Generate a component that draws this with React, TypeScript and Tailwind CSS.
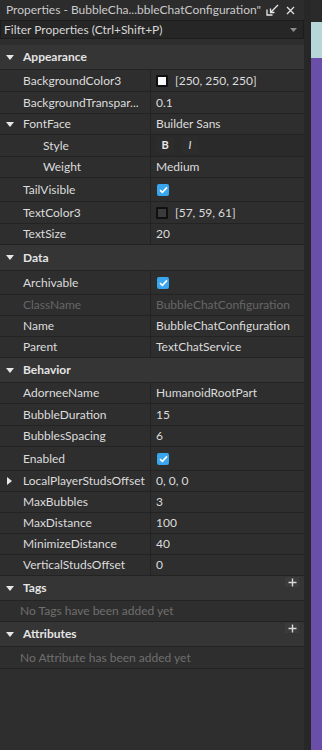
import React from "react";

const FONT = { fontFamily: "Lato, 'Noto Sans', sans-serif" };

function Down() {
  return (
    <svg width="8" height="5" viewBox="0 0 8 5"><polygon points="0,0 8,0 4,5" fill="#e6e6e6" /></svg>
  );
}
function Right() {
  return (
    <svg width="5" height="8" viewBox="0 0 5 8"><polygon points="0,0 5,4 0,8" fill="#e6e6e6" /></svg>
  );
}

function Check() {
  return (
    <div className="w-[12px] h-[12px] rounded-[2px] bg-[#39a5ef] flex items-center justify-center">
      <svg width="9" height="8" viewBox="0 0 9 8"><path d="M1 4.2 L3.4 6.4 L8 1.4" stroke="#fff" strokeWidth="1.6" fill="none" /></svg>
    </div>
  );
}

function Swatch({ color, text }: { color: string; text: string }) {
  return (
    <div className="flex items-center">
      <div className="w-[12px] h-[12px] border border-[#101010] rounded-[1px] p-[1px] bg-[#101010]">
        <div className="w-full h-full" style={{ background: color }} />
      </div>
      <span className="ml-[7px]">{text}</span>
    </div>
  );
}

function Header({ title, h = "h-[25px]", plus = false }: { title: string; h?: string; plus?: boolean }) {
  return (
    <div className={`relative flex items-center bg-[#353535] border-b border-[#232323] ${h}`}>
      <div className="w-[23px] pl-[6px] flex items-center"><Down /></div>
      <span className="text-[12px] font-bold text-[#e4e4e4]">{title}</span>
      {plus && (
        <div className="absolute right-[5px] top-[1px] w-[14px] h-[10px] bg-[#3b3b3b] flex items-center justify-center">
          <svg width="9" height="9" viewBox="0 0 9 9"><path d="M4.5 0.5 V8.5 M0.5 4.5 H8.5" stroke="#d8d8d8" strokeWidth="1.4" /></svg>
        </div>
      )}
    </div>
  );
}

function Row({
  name,
  h = "h-[21px]",
  nested = false,
  arrow,
  disabled = false,
  valueBg = "",
  children,
}: {
  name: string;
  h?: string;
  nested?: boolean;
  arrow?: "down" | "right";
  disabled?: boolean;
  valueBg?: string;
  children?: React.ReactNode;
}) {
  const tc = disabled ? "text-[#666666]" : "text-[#dcdcdc]";
  return (
    <div className={`flex border-b border-[#232323] text-[12px] ${h} ${tc}`}>
      <div className="w-[151px] shrink-0 flex items-center border-r border-[#232323] whitespace-nowrap overflow-hidden">
        <div className={`${nested ? "w-[43px]" : "w-[23px]"} shrink-0 pl-[6px] flex items-center`}>
          {arrow === "down" && <Down />}
          {arrow === "right" && <div className="pl-[1px] flex"><Right /></div>}
        </div>
        <span>{name}</span>
      </div>
      <div className={`flex-1 flex items-center pl-[5px] whitespace-nowrap overflow-hidden ${valueBg}`}>{children}</div>
    </div>
  );
}

export default function App() {
  return (
    <div className="w-[322px] h-[750px] flex bg-[#2e2e2e] overflow-hidden" style={FONT}>
      <div className="w-[304px] shrink-0 flex flex-col">
        <div className="h-[20px] flex items-center bg-[#2c2c2c] pl-[6px] pr-[9px] text-[12px] text-[#cacaca]">
          <span className="whitespace-nowrap">Properties - BubbleCha...bbleChatConfiguration"</span>
          <div className="flex-1" />
          <svg width="13" height="12" viewBox="0 0 13 12" className="mr-[7px]">
            <path d="M1 5.5 V11 H6.5" stroke="#e8e8e8" strokeWidth="1.3" fill="none" />
            <path d="M12 1 L4.5 8.5 M4.5 4.5 V8.5 H8.5" stroke="#e8e8e8" strokeWidth="1.3" fill="none" />
          </svg>
          <svg width="9" height="9" viewBox="0 0 9 9">
            <path d="M1 1 L8 8 M8 1 L1 8" stroke="#e0e0e0" strokeWidth="1.3" />
          </svg>
        </div>
        <div className="h-[19px] flex items-center bg-[#262626] border border-[#1c1c1c] pl-[3px] pr-[6px] text-[12px] text-[#d6d6d6]">
          <span>Filter Properties (Ctrl+Shift+P)</span>
          <div className="flex-1" />
          <svg width="7" height="4" viewBox="0 0 7 4"><polygon points="0,0 7,0 3.5,4" fill="#8c8c8c" /></svg>
        </div>
        <div className="h-[6px]" />

        <Header title="Appearance" />
        <Row name="BackgroundColor3" h="h-[22px]"><Swatch color="#fafafa" text="[250, 250, 250]" /></Row>
        <Row name="BackgroundTranspar..." h="h-[22px]">0.1</Row>
        <Row name="FontFace" arrow="down">Builder Sans</Row>
        <Row name="Style" nested h="h-[22px]" valueBg="bg-[#2a2a2a]">
          <div className="flex items-center gap-[7px] text-[11px] text-[#e8e8e8]">
            <div className="w-[18px] h-[17px] flex items-center justify-center bg-[#2c2c2c] font-bold">B</div>
            <div className="w-[18px] h-[17px] flex items-center justify-center bg-[#2c2c2c] italic">I</div>
          </div>
        </Row>
        <Row name="Weight" nested>Medium</Row>
        <Row name="TailVisible" h="h-[24px]"><div className="pl-[1px]"><Check /></div></Row>
        <Row name="TextColor3" h="h-[22px]"><Swatch color="#393b3d" text="[57, 59, 61]" /></Row>
        <Row name="TextSize">20</Row>

        <Header title="Data" h="h-[26px]" />
        <Row name="Archivable" h="h-[24px]"><div className="pl-[1px]"><Check /></div></Row>
        <Row name="ClassName" disabled>BubbleChatConfiguration</Row>
        <Row name="Name">BubbleChatConfiguration</Row>
        <Row name="Parent">TextChatService</Row>

        <Header title="Behavior" />
        <Row name="AdorneeName">HumanoidRootPart</Row>
        <Row name="BubbleDuration" h="h-[22px]">15</Row>
        <Row name="BubblesSpacing">6</Row>
        <Row name="Enabled" h="h-[24px]"><div className="pl-[1px]"><Check /></div></Row>
        <Row name="LocalPlayerStudsOffset" arrow="right">0, 0, 0</Row>
        <Row name="MaxBubbles">3</Row>
        <Row name="MaxDistance">100</Row>
        <Row name="MinimizeDistance">40</Row>
        <Row name="VerticalStudsOffset">0</Row>

        <Header title="Tags" plus />
        <div className="h-[21px] flex items-center pl-[20px] border-b border-[#232323] text-[12px] text-[#6e6e6e]">No Tags have been added yet</div>
        <Header title="Attributes" plus />
        <div className="h-[22px] flex items-center pl-[20px] border-b border-[#232323] text-[12px] text-[#6e6e6e]">No Attribute has been added yet</div>
      </div>
      <div className="w-[7px] shrink-0 bg-[#272727]" />
      <div className="flex-1 flex flex-col">
        <div className="h-[22px] bg-[#2a2a2a]" />
        <div className="h-[36px] bg-[#b7d6da]" />
        <div className="flex-1 bg-[#6a4ea7]" />
      </div>
    </div>
  );
}
